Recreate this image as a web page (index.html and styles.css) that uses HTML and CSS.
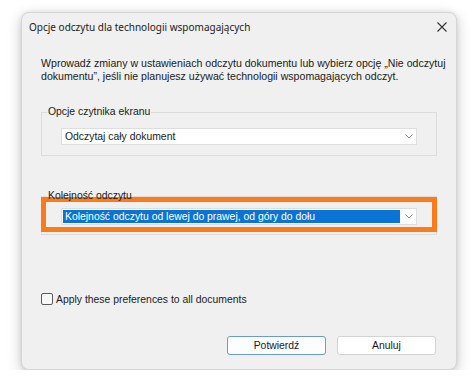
FILE: index.html
```html
<!DOCTYPE html>
<html lang="pl">
<head>
  <meta charset="UTF-8">
  <title>Opcje odczytu dla technologii wspomagających</title>
  <meta name="viewport" content="width=device-width, initial-scale=1.0">
  <link rel="stylesheet" href="styles.css">
</head>
<body>

  <div class="dialog">
    <div class="titlebar">
      <span class="title">Opcje odczytu dla technologii wspomagających</span>
      <svg class="close" width="10" height="10" viewBox="0 0 10 10">
        <path d="M0.5 0.5 L9.5 9.5 M9.5 0.5 L0.5 9.5" stroke="#333" stroke-width="1.1" fill="none"/>
      </svg>
    </div>

    <div class="content">
      <p class="desc">Wprowadź zmiany w ustawieniach odczytu dokumentu lub wybierz opcję „Nie odczytuj<br>dokumentu”, jeśli nie planujesz używać technologii wspomagających odczyt.</p>

      <fieldset class="group">
        <legend>Opcje czytnika ekranu</legend>
        <div class="combo">
          <span class="combo-text">Odczytaj cały dokument</span>
          <svg class="arrow" width="8" height="5" viewBox="0 0 8 5">
            <path d="M0.5 0.5 L4 4 L7.5 0.5" stroke="#8a8a8a" stroke-width="1" fill="none"/>
          </svg>
        </div>
      </fieldset>

      <fieldset class="group group-order">
        <legend>Kolejność odczytu</legend>
        <div class="highlight">
          <div class="combo">
            <span class="combo-text selected">Kolejność odczytu od lewej do prawej, od góry do dołu</span>
            <svg class="arrow" width="8" height="5" viewBox="0 0 8 5">
              <path d="M0.5 0.5 L4 4 L7.5 0.5" stroke="#8a8a8a" stroke-width="1" fill="none"/>
            </svg>
          </div>
        </div>
      </fieldset>

      <label class="check">
        <span class="box"></span>
        <span>Apply these preferences to all documents</span>
      </label>

      <div class="buttons">
        <button class="btn primary">Potwierdź</button>
        <button class="btn">Anuluj</button>
      </div>
    </div>
  </div>

</body>
</html>
```

FILE: styles.css
```css
body {
  margin: 0;
  background: #ffffff;
  font-family: 'Liberation Sans', Arial, sans-serif;
  font-size: 10.4px;
  color: #1a1a1a;
}

.dialog {
  margin: 12px 0 0 21px;
  width: 436px;
  height: 358px;
  background: #f0f0f0;
  border: 1px solid #d6d6d6;
  border-radius: 8px;
  box-sizing: border-box;
  box-shadow: 0 4px 14px rgba(0, 0, 0, 0.22), 0 0 4px rgba(0, 0, 0, 0.08);
  display: flex;
  flex-direction: column;
}

.titlebar {
  height: 26px;
  display: flex;
  align-items: center;
  justify-content: space-between;
  padding: 0 9px 0 7px;
}

.title {
  font-family: 'Noto Sans', sans-serif;
  font-size: 10px;
  color: #1a1a1a;
  padding-top: 2px;
}

.close {
  margin-top: 2px;
}

.content {
  flex: 1;
  display: flex;
  flex-direction: column;
  padding: 0 19px 14px 19px;
}

.desc {
  margin: 18px 0 0 0;
  font-size: 10.6px;
  line-height: 13px;
  white-space: nowrap;
}

.group {
  margin: 22px 0 0 0;
  border: 1px solid #dcdcdc;
  padding: 9px 19px 10px 19px;
}

.group legend {
  padding: 0 1px;
  margin-left: -14px;
  line-height: 14px;
}

.combo {
  height: 17px;
  background: #ffffff;
  border: 1px solid #dedede;
  box-sizing: border-box;
  display: flex;
  align-items: center;
  justify-content: space-between;
  padding: 0 3px 0 1px;
}

.combo-text {
  padding: 0 2px;
  line-height: 13px;
}

.combo-text.selected {
  background: #0a74d6;
  color: #ffffff;
  flex: 1;
  margin-right: 5px;
}

.group-order {
  margin-top: 33px;
  padding: 0 0 2px 0;
}

.group-order legend {
  margin-left: 5px;
}

.highlight {
  margin: -6px -1px 0 -1px;
  border: 5px solid #fb7a1c;
  padding: 6px 15px 2px 15px;
}

.check {
  margin-top: 58px;
  display: flex;
  align-items: center;
  gap: 3px;
}

.box {
  width: 10px;
  height: 10px;
  border: 1px solid #5a5a5a;
  border-radius: 2px;
  background: #f7f7f7;
}

.buttons {
  margin-top: auto;
  display: flex;
  justify-content: flex-end;
  gap: 11px;
  padding-right: 1px;
}

.btn {
  width: 99px;
  height: 19px;
  font-family: 'Liberation Sans', Arial, sans-serif;
  font-size: 10.4px;
  color: #1a1a1a;
  background: #ffffff;
  border: 1px solid #d3d3d3;
  border-radius: 3px;
  padding: 0;
}

.btn.primary {
  background: #fbfdff;
  border-color: #6a9cc6;
}
```
